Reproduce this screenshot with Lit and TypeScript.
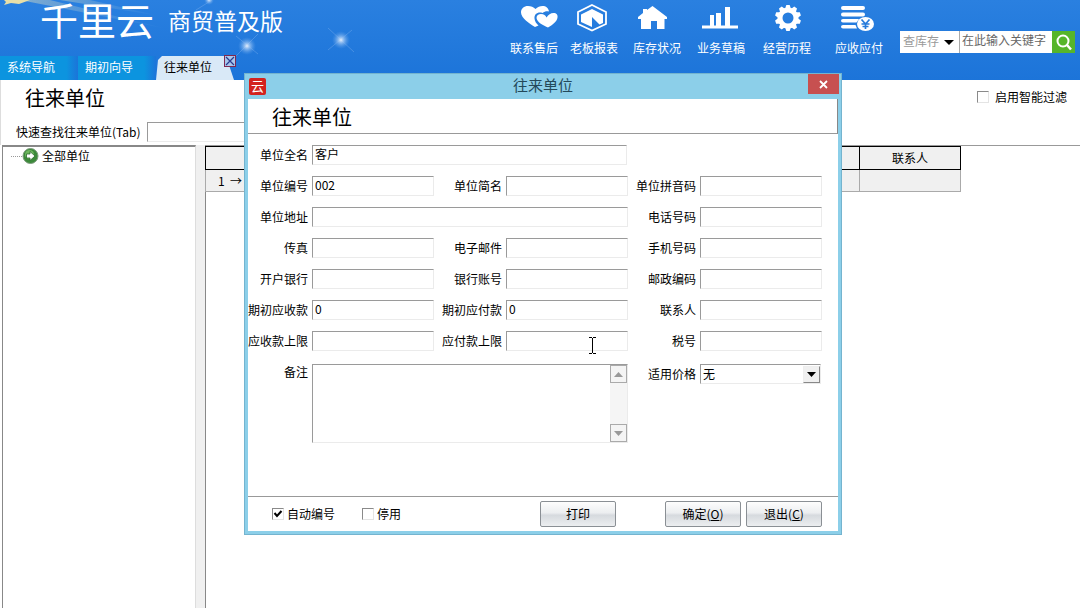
import { LitElement, html, css, svg } from "lit";
import { customElement, state } from "lit/decorators.js";
import { classMap } from "lit/directives/class-map.js";

interface Field {
  id: string;
  label: string;
  value?: string;
  wide?: boolean;
  alone?: boolean;
}

const FIELDS: Field[] = [
  { id: "fullName", label: "单位全名", value: "客户", wide: true, alone: true },
  { id: "code", label: "单位编号", value: "002" },
  { id: "shortName", label: "单位简名" },
  { id: "pinyin", label: "单位拼音码" },
  { id: "address", label: "单位地址", wide: true },
  { id: "phone", label: "电话号码" },
  { id: "fax", label: "传真" },
  { id: "email", label: "电子邮件" },
  { id: "mobile", label: "手机号码" },
  { id: "bank", label: "开户银行" },
  { id: "account", label: "银行账号" },
  { id: "zip", label: "邮政编码" },
  { id: "receivable", label: "期初应收款", value: "0" },
  { id: "payable", label: "期初应付款", value: "0" },
  { id: "contact", label: "联系人" },
  { id: "receivableMax", label: "应收款上限" },
  { id: "payableMax", label: "应付款上限" },
  { id: "tax", label: "税号" },
];

const gearTeeth = Array.from({ length: 10 }, (_, i) => i * 36);

const TOOLS = [
  {
    label: "联系售后",
    icon: svg`
      <path d="M25 23C20 20 11 14 11 8.500C11 4.500 14 2 18 2C21 2 23.500 3 25.500 5C27.500 3 30 2 32.500 2C36 2 38.500 4 39 7.500C36.500 7 34.500 7.500 32.500 9C28 7.500 24 10 24.500 14.500C24.700 17.500 26.500 19.500 28.500 21.500Z"/>
      <path d="M38 23.500C33.500 21.500 27 18.500 26.500 14C26.500 11.500 28.500 10 31 10C34 10 35.500 11.500 36.500 13.500C38.500 10.500 40.500 9 43.500 9C46.500 9 48 11 47.500 13.500C47 17.500 42.500 21 38 23.500Z"/>`,
  },
  {
    label: "老板报表",
    icon: svg`
      <path d="M22 1L36 8V20L22 26.500L8 20V8Z" fill="none" stroke="#fff" stroke-width="1.800"/>
      <path d="M22 5L33 10.500V19L29.500 20.500L22 13V23L11 18V10.500Z"/>`,
  },
  {
    label: "库存状况",
    icon: svg`<path d="M19.500 2L34 13V15H31.500V25H24V17H18V25H8V15H5V13L10 9V5H14V6Z"/>`,
  },
  {
    label: "业务草稿",
    icon: svg`<path d="M5 21.500H13V11H17V21.500H19V9H24V21.500H28V3H33V21.500H41V24.500H5Z"/>`,
  },
  {
    label: "经营历程",
    icon: svg`
      ${gearTeeth.map(
        (a) => svg`<path d="M22 5L23.300 1H26.700L28 5Z" transform="rotate(${a} 25 14)"/>`
      )}
      <circle cx="25" cy="14" r="8" fill="none" stroke="#fff" stroke-width="5"/>`,
  },
  {
    label: "应收应付",
    icon: svg`
      <path d="M8 2H28Q30 2 30 4T28 6H8Q6 6 6 4T8 2ZM8 8.500H28Q30 8.500 30 10.500T28 12.500H8Q6 12.500 6 10.500T8 8.500ZM8 15H24L21.500 18.500H8Q6 18.500 6 16.750T8 15ZM8 21H20.500L22 24.500H8Q6 24.500 6 22.750T8 21Z"/>
      <ellipse cx="30.500" cy="20" rx="8.500" ry="7"/>
      <path d="M26.500 15.500L30.500 20L34.500 15.500M30.500 19V25M26.500 20H34.500M27.500 22.500H33.500" fill="none" stroke="#267bdb" stroke-width="1.700"/>`,
  },
];

@customElement("app-root")
export class AppRoot extends LitElement {
  static styles = css`
    :host {
      display: flex;
      flex-direction: column;
      position: relative;
      min-height: 100vh;
      overflow: hidden;
      background: #fff;
      color: #000;
      font: 12px/16px "Noto Sans CJK SC", sans-serif;
    }
    * { box-sizing: border-box; }
    button, input, select, textarea { font: inherit; color: inherit; margin: 0; border-radius: 0; }
    a { color: inherit; text-decoration: none; }
    h1, h2 { margin: 0; font-weight: 400; font-size: 20px; line-height: 28px; }

    .banner {
      position: relative;
      display: flex;
      flex-direction: column;
      justify-content: space-between;
      height: 80px;
      background: linear-gradient(#2a80e0, #1c74d9);
      color: #fff;
    }
    .glow { position: absolute; left: 0; top: 0; width: 380px; height: 80px; }
    .top { display: flex; height: 56px; position: relative; }
    .brand { display: flex; align-items: center; gap: 14px; padding-left: 40px; height: 38px; flex: 1; white-space: nowrap; }
    .brand-name { font-size: 38px; line-height: 38px; font-weight: 400; }
    .brand-edition { font-size: 23px; line-height: 38px; padding-top: 2px; }
    .tools { display: grid; grid-template-columns: 60px 63px 64px 66px 72px 65px; }
    .tool { display: flex; flex-direction: column; padding-top: 4px; gap: 8px; width: 48px; white-space: nowrap; }
    .tool-icon { display: block; width: 48px; height: 28px; fill: #fff; }

    .search { display: flex; height: 22px; margin: 31px 5px 0 0; background: #fff; color: #777; }
    .scope { position: relative; display: flex; width: 60px; border-right: 1px solid #aaa; }
    .scope select { appearance: none; width: 100%; border: 0; padding: 0 3px 2px; background: none; color: #999; }
    .scope svg { position: absolute; right: 5px; top: 9px; width: 10px; height: 5px; pointer-events: none; }
    .search input { width: 92px; border: 0; padding: 0 0 4px 2px; background: none; }
    .search input::placeholder { color: #666; opacity: 1; }
    .search button { width: 23px; border: 0; padding: 2px; background: #56b52b; }
    .search button svg { display: block; width: 19px; height: 18px; }

    .tabs { display: flex; height: 24px; position: relative; }
    .tab { width: 78px; padding: 3px 7px; background: linear-gradient(90deg, #0c94df 85%, #1c74d9); white-space: nowrap; }
    .tab.active { padding-left: 8px; background: #d9e9f7; color: #000; clip-path: polygon(0 100%, 2px 4px, 6px 0, 70px 0, 100% 100%); }
    .tab-close { position: absolute; left: 224px; top: -1px; width: 12px; height: 12px; padding: 0; border: 1px solid #802850; background: #a9c8ec; }
    .tab-close svg { display: block; width: 10px; height: 10px; }

    .head { display: flex; justify-content: space-between; height: 65px; border-left: 1px solid #ddd; }
    .head-left { padding: 4px 0 0 15px; }
    .head-left h1 { padding-left: 9px; }
    .quick { display: flex; align-items: center; gap: 6px; padding-top: 10px; white-space: nowrap; }
    .quick input { width: 240px; height: 20px; }
    .filter { padding: 9px 13px 0 0; height: 25px; }

    .sunken { border: 1px solid #ebebeb; border-top-color: #9a9a9a; border-left-color: #9a9a9a; background: #fff; padding: 0 2px; outline: 0; }

    .check { display: flex; align-items: center; gap: 3px; white-space: nowrap; }
    .check.filter { gap: 6px; }
    .check input { appearance: none; width: 12px; height: 12px; border: 1px solid #e4e4e4; border-top-color: #8a8a8a; border-left-color: #8a8a8a; background: #fff; }
    .check input:checked { background: #fff url("data:image/svg+xml,%3Csvg xmlns='http://www.w3.org/2000/svg' viewBox='0 0 10 10'%3E%3Cpath d='M1.500 4L4 7L8.500 2' fill='none' stroke='black' stroke-width='2'/%3E%3C/svg%3E"); }

    .work { display: flex; flex: 1; }
    .tree { width: 194px; margin-left: 2px; border-top: 2px solid #888; border-left: 1px solid #888; border-right: 1px solid #ddd; }
    .node { display: flex; align-items: center; padding-left: 8px; height: 17px; }
    .node svg { width: 28px; height: 16px; margin-right: 3px; }
    .splitter { width: 9px; background: #f0f0f0; }
    .list { flex: 1; border-left: 1px solid #888; border-top: 1px solid #999; }
    table { border-collapse: collapse; table-layout: fixed; width: 756px; margin: 0 0 0 -1px; }
    th { height: 23px; padding: 0; border: 1px solid #000; background: #f0f0f0; font-weight: 400; }
    td { height: 22px; padding: 0 0 0 12px; border: 1px solid #aaa; background: #f0f0f0; white-space: pre; }
    .c-index { width: 40px; }
    .c-contact { width: 101px; }

    .overlay { position: absolute; inset: 0; display: flex; justify-content: center; align-items: flex-start; padding: 73px 0 0 6px; }
    .dialog { position: relative; width: 598px; border: 1px solid #74b4cf; background: #8ccfe9; padding: 0 3px 3px; }
    .titlebar { display: flex; align-items: center; height: 25px; }
    .logo { width: 17px; height: 17px; margin-left: 1px; border-radius: 2px; background: #d3231f; color: #fff; font-size: 13px; line-height: 16px; text-align: center; }
    .caption { flex: 1; text-align: center; font-size: 15px; line-height: 22px; color: #24495a; padding: 0 0 3px 12px; }
    .close { align-self: flex-start; width: 31px; height: 20px; padding: 0; border: 0; background: #c75050; margin-right: -1px; }
    .close svg { display: block; width: 9px; height: 9px; margin: 0 auto; }
    .pane { background: #fff; }
    .pane-head { height: 35px; padding: 4px 0 0 24px; border-right: 1px solid #888; border-bottom: 1px solid #999; }
    .form { display: grid; grid-template-columns: repeat(3, 186px); column-gap: 8px; row-gap: 11px; padding-top: 11px; height: 362px; align-content: start; }
    .field { display: flex; gap: 4px; }
    .field.wide { grid-column: span 2; }
    .field label { width: 60px; padding-top: 2px; display: flex; justify-content: flex-end; white-space: nowrap; }
    .field input { flex: 1; min-width: 0; height: 20px; padding-bottom: 3px; }
    .field.alone { margin-right: 1px; grid-column: 1 / span 2; }
    .field.alone + .field { grid-column: 1; }
    .last { padding-top: 2px; }
    .last label { padding-top: 0; }
    .last.price label { padding-top: 2px; }
    .memo { display: flex; flex: 1; height: 79px; padding: 0; }
    .memo textarea { flex: 1; min-width: 0; border: 0; padding: 2px; resize: none; outline: 0; }
    .bar { display: flex; flex-direction: column; justify-content: space-between; width: 17px; background: #f5f5f5; }
    .bar button { height: 18px; padding: 0; border: 1px solid #aaa; background: #f4f4f4; }
    .bar svg { display: block; width: 9px; height: 5px; margin: 0 auto; }
    .pick { position: relative; flex: 1; height: 20px; padding: 0; margin-right: 1px; }
    .pick select { appearance: none; width: 100%; height: 18px; border: 0; padding: 0 2px; background: none; }
    .pick-arrow { position: absolute; right: 0; top: 1px; width: 17px; height: 17px; background: #f0f0f0; border: 1px solid #eee; border-right-color: #888; border-bottom-color: #888; pointer-events: none; }
    .pick-arrow svg { display: block; width: 9px; height: 5px; margin: 5px auto 0; }

    .foot { display: flex; align-items: center; height: 35px; padding: 0 16px 0 24px; border-top: 1px solid #999; }
    .foot .check + .check { margin-left: 27px; }
    .push { width: 76px; height: 26px; padding: 0; border: 1px solid #8a8f94; border-radius: 2px; background: linear-gradient(#fdfdfd, #eceef0 45%, #d6dade 55%, #eceef0); }
    .print { margin-left: auto; margin-right: 49px; }
    .ok { margin-right: 5px; }
    .caret { position: absolute; left: 343px; top: 263px; width: 9px; height: 17px; pointer-events: none; }
  `;

  @state() private activeTab = 2;

  private tabs = ["系统导航", "期初向导", "往来单位"];

  private triangle(color: string, up = false) {
    return html`<svg viewBox="0 0 10 5" preserveAspectRatio="none" aria-hidden="true">
      <path d=${up ? "M0 5H10L5 0Z" : "M0 0H10L5 5Z"} fill=${color} />
    </svg>`;
  }

  private renderBanner() {
    return html`<header class="banner">
      <svg class="glow" viewBox="0 0 380 80" aria-hidden="true">
        <defs>
          <radialGradient id="spark"><stop offset="0" stop-color="#e4effc" /><stop offset=".35" stop-color="#a9ccf5" stop-opacity=".7" /><stop offset="1" stop-color="#5a9de8" stop-opacity="0" /></radialGradient>
          <linearGradient id="beam"><stop offset="0" stop-color="#e9e3b8" stop-opacity=".8" /><stop offset="1" stop-color="#8cbcf0" stop-opacity="0" /></linearGradient>
        </defs>
        <path d="M20 0L50 0L168 29Z" fill="url(#beam)" opacity=".6" />
        <path d="M60 0L90 0L160 16Z" fill="url(#beam)" opacity=".5" />
        <path d="M4 0L6 2L4 5L11 3L19 4L30 0Z" fill="#e8dfa8" />
        <path d="M196 10L212 0M236 56L258 34M236 36L258 54M328 28L354 52M328 50L352 30" stroke="#7fb2ef" stroke-width="1" opacity=".4" />
        <circle cx="247" cy="46" r="9" fill="url(#spark)" />
        <circle cx="341" cy="40" r="9" fill="url(#spark)" />
        <circle cx="209" cy="0" r="5" fill="url(#spark)" />
      </svg>
      <div class="top">
        <div class="brand">
          <span class="brand-name">千里云</span>
          <span class="brand-edition">商贸普及版</span>
        </div>
        <nav class="tools">
          ${TOOLS.map(
            (t) => html`<a class="tool" href="#">
              <svg class="tool-icon" viewBox="0 0 48 28" aria-hidden="true">${t.icon}</svg>
              <span>${t.label}</span>
            </a>`
          )}
        </nav>
        <form class="search" @submit=${(e: Event) => e.preventDefault()}>
          <div class="scope">
            <select aria-label="查询范围"><option>查库存</option></select>
            ${this.triangle("#000")}
          </div>
          <input type="text" aria-label="关键字" placeholder="在此输入关键字" />
          <button aria-label="搜索">
            <svg viewBox="0 0 19 18" fill="none" stroke="#fff" aria-hidden="true">
              <circle cx="9" cy="8" r="5.500" stroke-width="2" /><path d="M13 12L17 16.500" stroke-width="2.500" />
            </svg>
          </button>
        </form>
      </div>
      <nav class="tabs">
        ${this.tabs.map(
          (t, i) => html`<a href="#" class=${classMap({ tab: true, active: i === this.activeTab })}
            @click=${() => (this.activeTab = i)}>${t}</a>`
        )}
        <button class="tab-close" aria-label="关闭">
          <svg viewBox="0 0 10 10" aria-hidden="true"><path d="M1 1L9 9M9 1L1 9" stroke="#2a3a90" stroke-width="1.200" /></svg>
        </button>
      </nav>
    </header>`;
  }

  private renderPage() {
    return html`<section class="head">
        <div class="head-left">
          <h1>往来单位</h1>
          <div class="quick">
            <label for="quick">快速查找往来单位(Tab)</label>
            <input id="quick" class="sunken" type="text" />
          </div>
        </div>
        <label class="check filter"><input type="checkbox" />启用智能过滤</label>
      </section>
      <main class="work">
        <aside class="tree">
          <div class="node">
            <svg viewBox="0 0 28 16" aria-hidden="true">
              <path d="M0 8.500H12" stroke="#999" stroke-dasharray="1 1" />
              <circle cx="19.500" cy="8" r="7.500" fill="#3c8a3a" stroke="#7d9a7c" />
              <circle cx="18.500" cy="6.500" r="4.500" fill="#6fb75f" />
              <path d="M15.500 6H19V3.500L24 8L19 12.500V10H15.500Z" fill="#fff" stroke="#2c6b2c" stroke-width=".8" />
            </svg>
            <span>全部单位</span>
          </div>
        </aside>
        <div class="splitter"></div>
        <section class="list">
          <table>
            <thead><tr><th class="c-index"></th><th></th><th class="c-contact">联系人</th></tr></thead>
            <tbody><tr><td>1  →</td><td></td><td></td></tr></tbody>
          </table>
        </section>
      </main>`;
  }

  private renderField(f: Field) {
    return html`<div class=${classMap({ field: true, wide: !!f.wide, alone: !!f.alone })}>
      <label for=${f.id}>${f.label}</label>
      <input id=${f.id} class="sunken" type="text" .value=${f.value ?? ""} />
    </div>`;
  }

  private renderDialog() {
    return html`<div class="overlay">
      <section class="dialog" role="dialog" aria-labelledby="caption">
        <div class="titlebar">
          <span class="logo">云</span>
          <span class="caption" id="caption">往来单位</span>
          <button class="close" aria-label="关闭窗口">
            <svg viewBox="0 0 9 9" aria-hidden="true"><path d="M1 1L8 8M8 1L1 8" stroke="#fff" stroke-width="1.800" /></svg>
          </button>
        </div>
        <div class="pane">
          <div class="pane-head"><h2>往来单位</h2></div>
          <div class="form">
            ${FIELDS.map((f) => this.renderField(f))}
            <div class="field wide last">
              <label for="memo">备注</label>
              <div class="memo sunken">
                <textarea id="memo"></textarea>
                <div class="bar">
                  <button disabled aria-label="向上">${this.triangle("#999", true)}</button>
                  <button disabled aria-label="向下">${this.triangle("#999")}</button>
                </div>
              </div>
            </div>
            <div class="field last price">
              <label for="price">适用价格</label>
              <div class="pick sunken">
                <select id="price"><option>无</option></select>
                <span class="pick-arrow">${this.triangle("#000")}</span>
              </div>
            </div>
          </div>
          <div class="foot">
            <label class="check"><input type="checkbox" checked />自动编号</label>
            <label class="check"><input type="checkbox" />停用</label>
            <button class="push print">打印</button>
            <button class="push ok">确定(<u>O</u>)</button>
            <button class="push">退出(<u>C</u>)</button>
          </div>
        </div>
        <svg class="caret" viewBox="0 0 9 17" aria-hidden="true">
          <path d="M1 .5H4M5 .5H8M4.500 1V16M1 16.500H4M5 16.500H8" stroke="#000" fill="none" />
        </svg>
      </section>
    </div>`;
  }

  render() {
    return html`${this.renderBanner()}${this.renderPage()}${this.renderDialog()}`;
  }
}
